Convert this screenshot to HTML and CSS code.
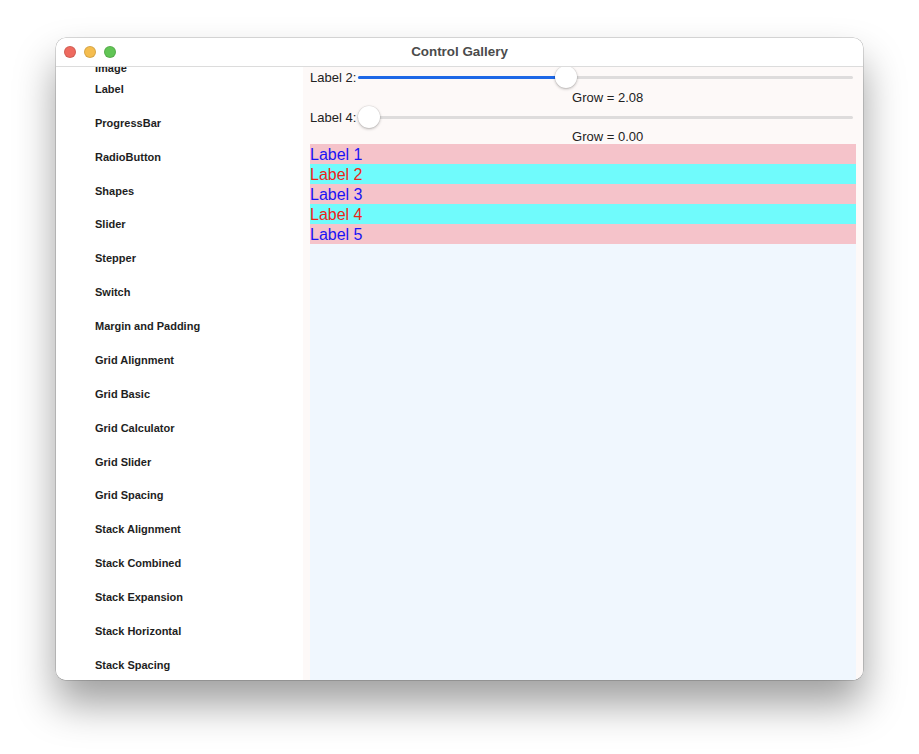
FILE: index.html
```html
<!DOCTYPE html>
<html>
<head>
<meta charset="utf-8">
<title>Control Gallery</title>
<link rel="stylesheet" href="styles.css">
</head>
<body>
<div class="window">
  <div class="titlebar">
    <div class="lights">
      <span class="light red"></span>
      <span class="light yellow"></span>
      <span class="light green"></span>
    </div>
    <div class="title">Control Gallery</div>
  </div>
  <div class="main">
    <nav class="sidebar">
      <ul class="nav-list">
        <li class="nav-item first">Image</li>
        <li class="nav-item">Label</li>
        <li class="nav-item">ProgressBar</li>
        <li class="nav-item">RadioButton</li>
        <li class="nav-item">Shapes</li>
        <li class="nav-item">Slider</li>
        <li class="nav-item">Stepper</li>
        <li class="nav-item">Switch</li>
        <li class="nav-item">Margin and Padding</li>
        <li class="nav-item">Grid Alignment</li>
        <li class="nav-item">Grid Basic</li>
        <li class="nav-item">Grid Calculator</li>
        <li class="nav-item">Grid Slider</li>
        <li class="nav-item">Grid Spacing</li>
        <li class="nav-item">Stack Alignment</li>
        <li class="nav-item">Stack Combined</li>
        <li class="nav-item">Stack Expansion</li>
        <li class="nav-item">Stack Horizontal</li>
        <li class="nav-item">Stack Spacing</li>
      </ul>
    </nav>
    <section class="content">
      <div class="controls">
        <div class="slider-label row-a">Label 2:</div>
        <div class="slider row-a">
          <div class="track"></div>
          <div class="fill" style="width: calc(11px + (100% - 22px) * 0.416)"></div>
          <div class="thumb" style="left: calc((100% - 22px) * 0.416)"></div>
        </div>
        <div class="grow row-b">Grow = 2.08</div>
        <div class="slider-label row-a">Label 4:</div>
        <div class="slider row-a">
          <div class="track"></div>
          <div class="fill" style="width: calc(11px + (100% - 22px) * 0)"></div>
          <div class="thumb" style="left: calc((100% - 22px) * 0)"></div>
        </div>
        <div class="grow row-c">Grow = 0.00</div>
      </div>
      <div class="stack">
        <div class="lbl pink blue">Label 1</div>
        <div class="lbl aqua red-t">Label 2</div>
        <div class="lbl pink blue">Label 3</div>
        <div class="lbl aqua red-t">Label 4</div>
        <div class="lbl pink blue">Label 5</div>
      </div>
      <div class="filler"></div>
    </section>
  </div>
</div>
</body>
</html>
```
FILE: styles.css
```css
html, body {
  margin: 0;
  padding: 0;
  background: #ffffff;
  font-family: "Liberation Sans", Arial, sans-serif;
}

body {
  min-height: 754px;
  padding-top: 38px;
  box-sizing: border-box;
}

.window {
  margin: 0 0 0 56px;
  width: 807px;
  height: 642px;
  border-radius: 10px;
  overflow: hidden;
  background: #ffffff;
  box-shadow: 0 24px 40px rgba(0, 0, 0, 0.38), 0 0 0 0.5px rgba(0, 0, 0, 0.28);
  display: flex;
  flex-direction: column;
}

.titlebar {
  height: 28px;
  flex: none;
  border-bottom: 1px solid #dcdcdc;
  display: flex;
  align-items: center;
  position: relative;
  background: #ffffff;
  z-index: 2;
}

.lights {
  display: flex;
  gap: 8px;
  padding-left: 8px;
}

.light {
  width: 12px;
  height: 12px;
  border-radius: 50%;
  box-sizing: border-box;
  border: 0.5px solid rgba(0, 0, 0, 0.12);
}
.light.red { background: #ee6a5f; }
.light.yellow { background: #f5bd4f; }
.light.green { background: #61c555; }

.title {
  position: absolute;
  left: 0;
  right: 0;
  top: 0;
  line-height: 28px;
  text-align: center;
  font-weight: bold;
  font-size: 13.4px;
  color: #4b4b4b;
  pointer-events: none;
}

.main {
  flex: 1;
  display: flex;
  min-height: 0;
}

.sidebar {
  width: 247px;
  flex: none;
  background: #ffffff;
  overflow: hidden;
}

.nav-list {
  list-style: none;
  margin: -15px 0 0 0;
  padding: 0;
}

.nav-item {
  height: 33.88px;
  line-height: 33.88px;
  padding-left: 39px;
  font-size: 11px;
  font-weight: bold;
  color: #1e1e1e;
  white-space: nowrap;
}

.nav-item.first {
  margin-bottom: -13px;
}

.content {
  flex: 1;
  background: #fdf9f8;
  padding: 0 7px;
  display: flex;
  flex-direction: column;
  min-width: 0;
}

.controls {
  display: grid;
  grid-template-columns: auto 1fr;
  column-gap: 2px;
  font-size: 13px;
  color: #222222;
}

.row-a { height: 20px; }
.row-b { height: 20px; }
.row-c { height: 17px; }

.slider-label {
  line-height: 22px;
}

.slider {
  position: relative;
  margin-right: 3px;
}

.track {
  position: absolute;
  left: 0;
  right: 0;
  top: 9px;
  height: 3px;
  border-radius: 2px;
  background: #dedcdc;
}

.fill {
  position: absolute;
  left: 0;
  top: 9px;
  height: 3px;
  border-radius: 2px;
  background: #1d67e6;
}

.thumb {
  position: absolute;
  top: -1px;
  width: 22px;
  height: 22px;
  border-radius: 50%;
  background: #ffffff;
  box-shadow: 0 1px 3px rgba(0, 0, 0, 0.28), 0 0 0 0.5px rgba(0, 0, 0, 0.08);
}

.grow {
  grid-column: 2;
  text-align: center;
  line-height: 22px;
  padding-left: 1px;
}
.row-c.grow { line-height: 19px; }

.stack {
  display: flex;
  flex-direction: column;
}

.lbl {
  height: 20px;
  line-height: 22px;
  font-size: 16px;
}

.pink { background: #f5c3ca; }
.aqua { background: #70fbfc; }
.blue { color: #1a14f5; }
.red-t { color: #ee2418; }

.filler {
  flex: 1;
  background: #f0f7fe;
}
```
